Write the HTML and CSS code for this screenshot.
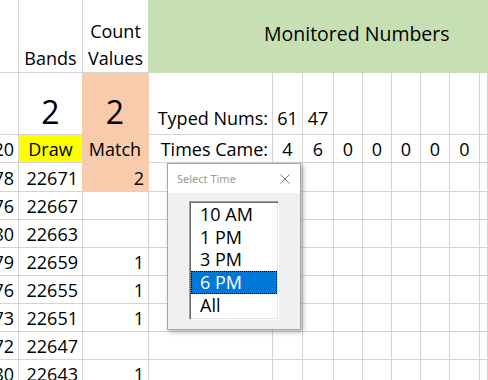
FILE: index.html
```html
<!DOCTYPE html>
<html lang="en">

<head>
    <meta charset="UTF-8">
    <title>Monitored Numbers</title>
    <link rel="stylesheet" href="styles.css">
</head>

<body>
    <div class="sheet">
        <!-- row 1 -->
        <div class="c"></div>
        <div class="c hd">Bands</div>
        <div class="c hd">Count Values</div>
        <div class="grn">Monitored Numbers</div>

        <!-- row 2 -->
        <div class="c"></div>
        <div class="c big">2</div>
        <div class="c big org">2</div>
        <div class="c lbl r2">Typed Nums:</div>
        <div class="c r2">61</div>
        <div class="c r2">47</div>
        <div class="c"></div><div class="c"></div><div class="c"></div><div class="c"></div><div class="c"></div>
        <div class="c"></div>

        <!-- row 3 -->
        <div class="c n">20</div>
        <div class="c ylw">Draw</div>
        <div class="c org">Match</div>
        <div class="c lbl">Times Came:</div>
        <div class="c">4</div><div class="c">6</div><div class="c">0</div><div class="c">0</div><div class="c">0</div><div class="c">0</div><div class="c">0</div>
        <div class="c"></div>

        <!-- draws -->
        <div class="c n">78</div>
        <div class="c n">22671</div>
        <div class="c n org last">2</div>
        <div class="c"></div>
        <div class="c"></div><div class="c"></div><div class="c"></div><div class="c"></div><div class="c"></div><div class="c"></div><div class="c"></div>
        <div class="c"></div>

        <div class="c n">76</div>
        <div class="c n">22667</div>
        <div class="c n"></div>
        <div class="c"></div>
        <div class="c"></div><div class="c"></div><div class="c"></div><div class="c"></div><div class="c"></div><div class="c"></div><div class="c"></div>
        <div class="c"></div>

        <div class="c n">80</div>
        <div class="c n">22663</div>
        <div class="c n"></div>
        <div class="c"></div>
        <div class="c"></div><div class="c"></div><div class="c"></div><div class="c"></div><div class="c"></div><div class="c"></div><div class="c"></div>
        <div class="c"></div>

        <div class="c n">79</div>
        <div class="c n">22659</div>
        <div class="c n">1</div>
        <div class="c"></div>
        <div class="c"></div><div class="c"></div><div class="c"></div><div class="c"></div><div class="c"></div><div class="c"></div><div class="c"></div>
        <div class="c"></div>

        <div class="c n">76</div>
        <div class="c n">22655</div>
        <div class="c n">1</div>
        <div class="c"></div>
        <div class="c"></div><div class="c"></div><div class="c"></div><div class="c"></div><div class="c"></div><div class="c"></div><div class="c"></div>
        <div class="c"></div>

        <div class="c n">73</div>
        <div class="c n">22651</div>
        <div class="c n">1</div>
        <div class="c"></div>
        <div class="c"></div><div class="c"></div><div class="c"></div><div class="c"></div><div class="c"></div><div class="c"></div><div class="c"></div>
        <div class="c"></div>

        <div class="c n">72</div>
        <div class="c n">22647</div>
        <div class="c n"></div>
        <div class="c"></div>
        <div class="c"></div><div class="c"></div><div class="c"></div><div class="c"></div><div class="c"></div><div class="c"></div><div class="c"></div>
        <div class="c"></div>

        <div class="c n">80</div>
        <div class="c n">22643</div>
        <div class="c n">1</div>
        <div class="c"></div>
        <div class="c"></div><div class="c"></div><div class="c"></div><div class="c"></div><div class="c"></div><div class="c"></div><div class="c"></div>
        <div class="c"></div>
    </div>

    <div class="dlg">
        <div class="dlg-title">
            <span>Select Time</span>
            <svg width="10" height="10" viewBox="0 0 10 10">
                <path d="M0.5 0.5L9.5 9.5M9.5 0.5L0.5 9.5" stroke="#808080" stroke-width="1" fill="none" />
            </svg>
        </div>
        <div class="list">
            <div class="item">10 AM</div>
            <div class="item">1 PM</div>
            <div class="item">3 PM</div>
            <div class="item sel">6 PM</div>
            <div class="item">All</div>
        </div>
    </div>
</body>

</html>
```

FILE: styles.css
```css
* {
    margin: 0;
    padding: 0;
    box-sizing: border-box;
}

body {
    position: relative;
    width: 488px;
    height: 380px;
    overflow: hidden;
    background-color: #fff;
    font-family: "Open Sans", "Liberation Sans", sans-serif;
    font-size: 18px;
    color: #000;
}

.sheet {
    display: grid;
    grid-template-columns: 19px 64px 66px 124px 30px 31px 29px 29px 29px 29px 30px 1fr;
    grid-template-rows: 73px 62px 28px 29px repeat(7, 28px);
}

.c {
    display: flex;
    align-items: flex-end;
    justify-content: center;
    border-right: 1px solid #d4d4d4;
    border-bottom: 1px solid #d4d4d4;
    padding-bottom: 1px;
    line-height: 24px;
    white-space: nowrap;
    overflow: hidden;
}

.n {
    justify-content: flex-end;
    padding-right: 4px;
}

.hd {
    white-space: normal;
    text-align: center;
    line-height: 27px;
    padding-bottom: 0;
}

.big {
    font-size: 32px;
    line-height: 32px;
    padding-bottom: 6px;
}

.lbl {
    justify-content: flex-end;
    padding-right: 4px;
}

.r2 {
    padding-bottom: 4px;
}

.grn {
    grid-column: 4 / -1;
    margin-left: -1px;
    background-color: #c6e0b4;
    font-size: 19.5px;
    line-height: 27px;
    padding: 20px 0 0 116px;
    white-space: nowrap;
}

.org {
    margin-left: -1px;
    background-color: #f8cbad;
    border-color: #f8cbad;
}

.org.last {
    border-bottom-color: #d4d4d4;
}

.ylw {
    background-color: #ffff00;
}

/* popup */
.dlg {
    position: absolute;
    left: 167px;
    top: 163px;
    width: 134px;
    height: 167px;
    background-color: #f0f0f0;
    border: 1px solid #a6a6a6;
    box-shadow: 2px 2px 5px rgba(0, 0, 0, 0.3);
    font-family: "Noto Sans", "Open Sans", sans-serif;
}

.dlg-title {
    display: flex;
    align-items: center;
    justify-content: space-between;
    height: 29px;
    padding: 0 10px 0 9px;
    background-color: #fff;
    font-size: 11px;
    color: #9a9a9a;
}

.dlg-title svg {
    display: block;
}

.list {
    width: 90px;
    height: 119px;
    margin: 8px 0 0 21px;
    padding: 1px;
    background-color: #fff;
    border: 1px solid;
    border-color: #a0a0a0 #fff #fff #a0a0a0;
    box-shadow: inset 1px 1px 0 #696969, inset -1px -1px 0 #e3e3e3;
}

.item {
    height: 22.7px;
    line-height: 22.7px;
    padding-left: 9px;
    font-family: "Open Sans", sans-serif;
    font-size: 18px;
}

.item.sel {
    background-color: #0078d7;
    color: #fff;
    outline: 1px dotted #000;
    outline-offset: -1px;
}
```
